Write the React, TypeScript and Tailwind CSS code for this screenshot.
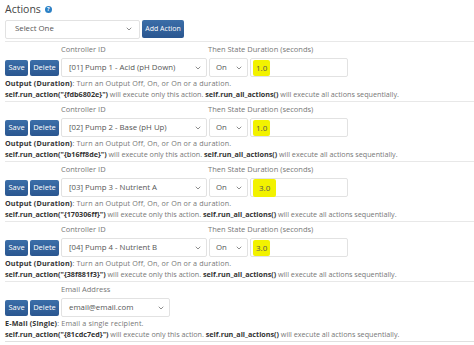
import { ChevronDown } from "lucide-react";

type Row = {
  label: string;
  value: string;
  state?: string;
  duration?: string;
  wide?: boolean;
  title: string;
  desc: string;
  id: string;
};

const rows: Row[] = [
  { label: "Controller ID", value: "[01] Pump 1 - Acid (pH Down)", state: "On", duration: "1.0", title: "Output (Duration)", desc: ": Turn an Output Off, On, or On or a duration.", id: "fdb6802e" },
  { label: "Controller ID", value: "[02] Pump 2 - Base (pH Up)", state: "On", duration: "1.0", title: "Output (Duration)", desc: ": Turn an Output Off, On, or On or a duration.", id: "b16ff8de" },
  { label: "Controller ID", value: "[03] Pump 3 - Nutrient A", state: "On", duration: "3.0", wide: true, title: "Output (Duration)", desc: ": Turn an Output Off, On, or On or a duration.", id: "170306ff" },
  { label: "Controller ID", value: "[04] Pump 4 - Nutrient B", state: "On", duration: "3.0", title: "Output (Duration)", desc: ": Turn an Output Off, On, or On or a duration.", id: "38f881f3" },
  { label: "Email Address", value: "email@email.com", title: "E-Mail (Single)", desc: ": Email a single recipient.", id: "81cdc7ed" },
];

function Select({ text, className }: { text: string; className: string }) {
  return (
    <div className={"h-[19px] border border-[#e2e2e2] rounded-[2px] bg-white flex items-center justify-between pl-[6px] pr-[4px] text-[7.8px] text-[#555] " + className}>
      <span className="whitespace-nowrap">{text}</span>
      <ChevronDown size={8} strokeWidth={2.5} className="text-[#777]" />
    </div>
  );
}

function Btn({ text, className = "" }: { text: string; className?: string }) {
  return (
    <div className={"h-[16px] rounded-[2px] bg-gradient-to-b from-[#3b6ea8] to-[#2a5690] text-white text-[7.5px] flex items-center justify-center " + className}>
      {text}
    </div>
  );
}

export default function App() {
  return (
    <div className="w-[474px] h-[345px] bg-white overflow-hidden pl-[5px]" style={{ fontFamily: '"Open Sans", sans-serif' }}>
      {/* Heading */}
      <div className="flex items-center gap-[4px] h-[18px] pt-[1px]">
        <span className="text-[10.5px] text-[#444]">Actions</span>
        <span className="w-[7px] h-[7px] rounded-full bg-[#2b80c5] text-white text-[5.5px] font-bold flex items-center justify-center leading-none">?</span>
      </div>

      {/* Add action */}
      <div className="flex items-center gap-[2px] h-[23px] pb-[1px]">
        <Select text="Select One" className="w-[135px] pl-[9px] pr-[6px]" />
        <div className="h-[18px] w-[42px] rounded-[2px] bg-gradient-to-b from-[#3b6ea8] to-[#2a5690] text-white text-[7px] flex items-center justify-center whitespace-nowrap">
          Add Action
        </div>
      </div>

      {rows.map((r) => (
        <div key={r.id} className="border-t border-[#e8e8e8] h-[60px] flex flex-col">
          {/* labels */}
          <div className="flex h-[14px] items-center text-[7.5px] text-[#777] pt-[1px]">
            <div className="w-[56px]" />
            <div className="w-[147px]">{r.label}</div>
            {r.state && <div className="whitespace-nowrap">Then State Duration (seconds)</div>}
          </div>
          {/* controls */}
          <div className="flex items-center gap-[2px] h-[21px] mt-[1px]">
            <Btn text="Save" className="w-[23px]" />
            <Btn text="Delete" className="w-[29px]" />
            <Select text={r.value} className={(r.state ? "w-[146px]" : "w-[109px]") + " pl-[7px]"} />
            {r.state && <Select text={r.state} className="w-[39px] pl-[5px]" />}
            {r.duration && (
              <div className="h-[19px] w-[98px] border border-[#e2e2e2] rounded-[2px] bg-white flex items-center pl-[2px] text-[8px] text-[#555]">
                <span className={"bg-[#f2f200] rounded-[2px] " + (r.wide ? "px-[6px] py-[3px]" : "px-[3px] py-[2px]")}>{r.duration}</span>
              </div>
            )}
          </div>
          {/* description */}
          <div className="text-[7.2px] leading-[11px] text-[#777] whitespace-nowrap">
            <div className="tracking-[0.15px]">
              <span className="font-bold text-[#333]">{r.title}</span>
              {r.desc}
            </div>
            <div>
              <span className="font-bold text-[#333]">self.run_action("{"{"}{r.id}{"}"}")</span> will execute only this action.{" "}
              <span className="font-bold text-[#333]">self.run_all_actions()</span> will execute all actions sequentially.
            </div>
          </div>
        </div>
      ))}
      <div className="border-t border-[#e0e0e0]" />
    </div>
  );
}
